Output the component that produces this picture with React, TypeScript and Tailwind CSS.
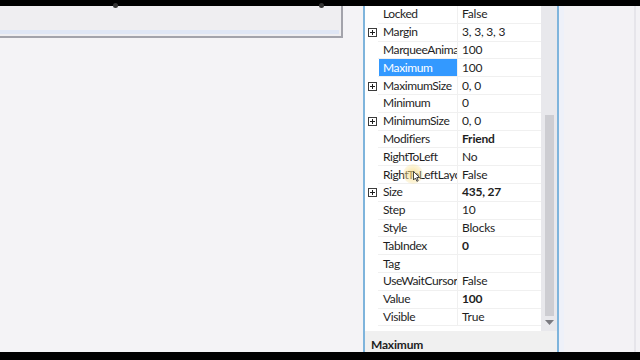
import { ReactNode } from "react";

type Prop = {
  name: string;
  value: string;
  expandable?: boolean;
  bold?: boolean;
  selected?: boolean;
};

const props: Prop[] = [
  { name: "Locked", value: "False" },
  { name: "Margin", value: "3, 3, 3, 3", expandable: true },
  { name: "MarqueeAnimationSpeed", value: "100" },
  { name: "Maximum", value: "100", selected: true },
  { name: "MaximumSize", value: "0, 0", expandable: true },
  { name: "Minimum", value: "0" },
  { name: "MinimumSize", value: "0, 0", expandable: true },
  { name: "Modifiers", value: "Friend", bold: true },
  { name: "RightToLeft", value: "No" },
  { name: "RightToLeftLayout", value: "False" },
  { name: "Size", value: "435, 27", expandable: true, bold: true },
  { name: "Step", value: "10" },
  { name: "Style", value: "Blocks" },
  { name: "TabIndex", value: "0", bold: true },
  { name: "Tag", value: "" },
  { name: "UseWaitCursor", value: "False" },
  { name: "Value", value: "100", bold: true },
  { name: "Visible", value: "True" }
];

function PlusBox() {
  return (
    <span className="flex h-[9px] w-[9px] items-center justify-center border border-[#3c3c3c] bg-white">
      <svg width="7" height="7" viewBox="0 0 7 7">
        <path d="M1 3.5h5M3.5 1v5" stroke="#1e1e1e" strokeWidth="1" />
      </svg>
    </span>
  );
}

function Row({ prop }: { prop: Prop }) {
  return (
    <div className="flex h-[17.8px] shrink-0">
      <div className="flex w-[13px] shrink-0 items-center justify-end pr-px">
        {prop.expandable ? <PlusBox /> : null}
      </div>
      <div className="flex w-[80px] shrink-0 border-b border-r border-[#f0f0f0] pl-px">
        <div
          className={`flex w-[78px] items-center overflow-hidden whitespace-nowrap pl-[4px] tracking-[-0.4px] ${
            prop.selected ? "bg-[#3399ff] text-white" : "text-[#1e1e1e]"
          }`}
        >
          {prop.name}
        </div>
      </div>
      <div
        className={`flex flex-1 items-center overflow-hidden whitespace-nowrap border-b border-[#f0f0f0] pl-[4px] text-[#1e1e1e] ${
          prop.bold ? "font-bold" : ""
        }`}
      >
        {prop.value}
      </div>
    </div>
  );
}

function Scrollbar() {
  return (
    <div className="flex w-[16px] shrink-0 flex-col items-center bg-[#e8e8ec]">
      <div className="h-[109px]" />
      <div className="h-[201px] w-[9px] bg-[#cdcdd2]" />
      <div className="mt-[4px]">
        <svg width="9" height="5" viewBox="0 0 9 5">
          <path d="M0 0h9L4.5 5z" fill="#7a7a80" />
        </svg>
      </div>
    </div>
  );
}

function Cursor(): ReactNode {
  return (
    <div className="absolute left-[403px] top-[164px] h-[20px] w-[20px] rounded-full bg-[radial-gradient(circle,rgba(246,214,120,0.75)_0%,rgba(248,226,150,0.45)_50%,rgba(250,240,200,0)_100%)]">
      <svg
        className="absolute left-[10px] top-[7px]"
        width="7"
        height="11"
        viewBox="0 0 7 11"
      >
        <path
          d="M0.5 0.5v8.5l2-2 1.4 3.3 1.3-0.6-1.4-3.2h2.8z"
          fill="#ffffff"
          stroke="#333"
          strokeWidth="0.9"
        />
      </svg>
    </div>
  );
}

export default function App() {
  return (
    <div
      className="relative flex h-[360px] w-[640px] flex-col overflow-hidden bg-black text-[12px] tracking-[-0.2px]"
      style={{ fontFamily: 'Lato, "Noto Sans", sans-serif' }}
    >
      <div className="h-[6px] shrink-0 bg-black" />
      <div className="flex min-h-0 flex-1">
        {/* designer surface */}
        <div className="flex w-[363px] shrink-0 flex-col bg-[#f4f3f6]">
          <div className="relative h-[32px] w-[343px] border-b-2 border-r-2 border-[#a3a3ab] bg-[#efeef1]">
            <div className="absolute bottom-[2px] left-0 right-[2px] h-[4px] bg-[#dfe6f5]" />
            <div className="absolute -top-[3px] left-[113px] h-[5px] w-[5px] rounded-full bg-[#333]" />
            <div className="absolute -top-[3px] left-[319px] h-[5px] w-[5px] rounded-full bg-[#333]" />
          </div>
        </div>
        <div className="w-[2px] shrink-0 bg-[#7eb4dc]" />
        {/* property grid */}
        <div className="flex w-[192px] shrink-0 flex-col bg-[#f0f0f0]">
          <div className="flex h-[325px] shrink-0">
            <div className="flex flex-1 flex-col overflow-hidden bg-white">
              {props.map((p) => (
                <Row key={p.name} prop={p} />
              ))}
            </div>
            <Scrollbar />
          </div>
          <div className="flex flex-1 items-end px-[6px]">
            <span className="font-bold leading-[14px] text-[#1e1e1e]">Maximum</span>
          </div>
        </div>
        <div className="w-[2px] shrink-0 bg-[#7eb4dc]" />
        {/* right surface */}
        <div className="flex flex-1 bg-[#f3f2f5]">
          <div className="w-[5px] bg-[#eef1f9]" />
          <div className="flex-1" />
          <div className="mr-[4px] w-[2px] bg-[#e6e5ea]" />
        </div>
      </div>
      <div className="h-[8px] shrink-0 bg-black" />
      <Cursor />
    </div>
  );
}
